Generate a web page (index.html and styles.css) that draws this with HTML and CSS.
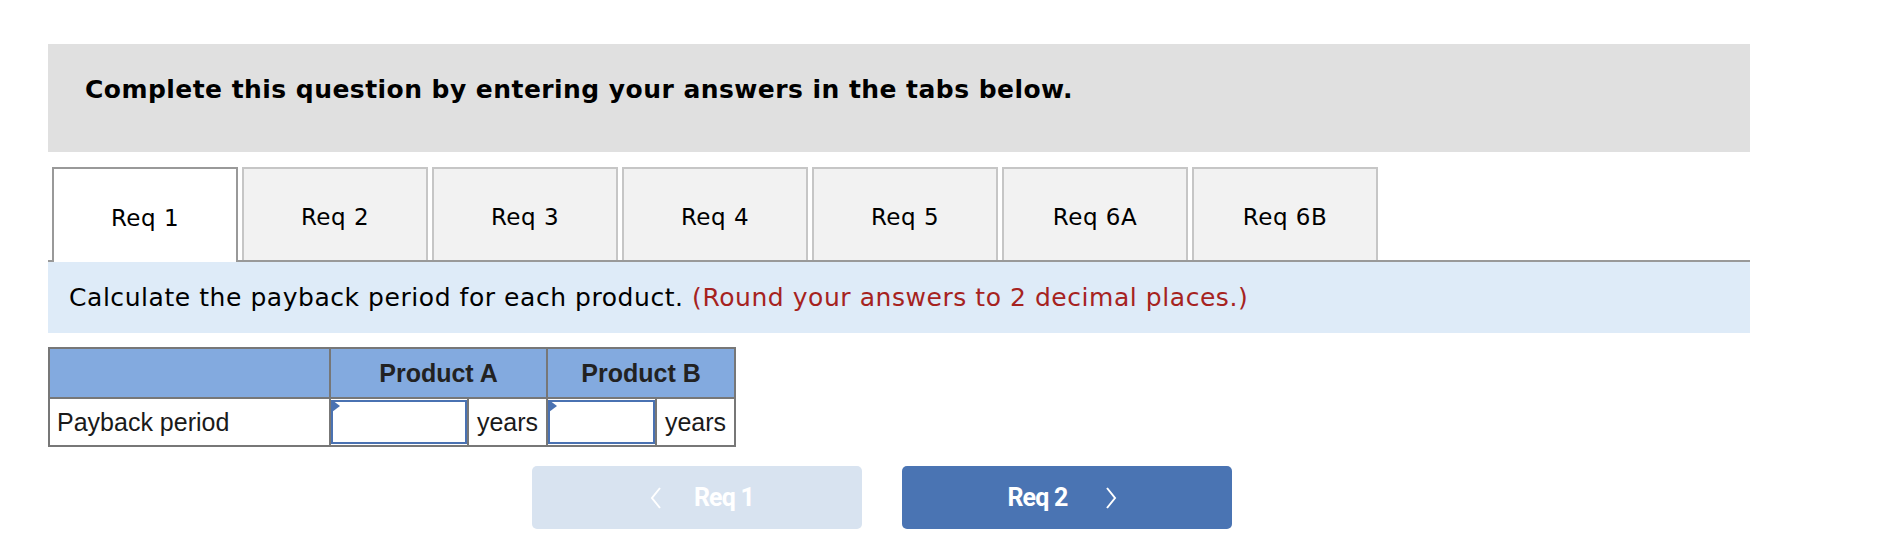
FILE: index.html
```html
<!DOCTYPE html>
<html lang="en">
<head>
    <meta charset="UTF-8">
    <title>Req 1</title>
    <link rel="stylesheet" href="styles.css">
</head>
<body>
    <div class="page">
        <div class="intro">
            <h1>Complete this question by entering your answers in the tabs below.</h1>
        </div>

        <!-- tabs -->
        <div class="tabs">
            <div class="tab active">Req 1</div>
            <div class="tab">Req 2</div>
            <div class="tab">Req 3</div>
            <div class="tab">Req 4</div>
            <div class="tab">Req 5</div>
            <div class="tab">Req 6A</div>
            <div class="tab">Req 6B</div>
        </div>

        <div class="instructions">
            <p>Calculate the payback period for each product. <span class="hint">(Round your answers to 2 decimal places.)</span></p>
        </div>

        <table class="answer-table">
            <tr class="head">
                <th class="label-col"></th>
                <th colspan="2">Product A</th>
                <th colspan="2">Product B</th>
            </tr>
            <tr>
                <td class="label-col">Payback period</td>
                <td class="input-cell input-a"><span class="marker"></span><input type="text"></td>
                <td class="unit">years</td>
                <td class="input-cell input-b"><span class="marker"></span><input type="text"></td>
                <td class="unit">years</td>
            </tr>
        </table>

        <div class="nav">
            <button class="nav-btn prev">
                <svg class="chev" width="12" height="22" viewBox="0 0 12 22"><path d="M10 1 L2 11 L10 21" fill="none" stroke="#fff" stroke-width="2"/></svg>
                <span>Req 1</span>
            </button>
            <button class="nav-btn next">
                <span>Req 2</span>
                <svg class="chev" width="12" height="22" viewBox="0 0 12 22"><path d="M2 1 L10 11 L2 21" fill="none" stroke="#fff" stroke-width="2"/></svg>
            </button>
        </div>
    </div>
</body>
</html>
```

FILE: styles.css
```css
body {
    margin: 0;
    background-color: #fff;
    color: #000;
    font-family: "DejaVu Sans", Verdana, sans-serif;
}
.page {
    width: 1702px;
    margin-left: 48px;
    padding-top: 44px;
}
.intro {
    background-color: #e0e0e0;
    height: 108px;
    padding-left: 37px;
    box-sizing: border-box;
    display: flex;
    align-items: center;
}
.intro h1 {
    margin: 0;
    font-size: 25px;
    letter-spacing: 0.45px;
    font-weight: bold;
    position: relative;
    top: -9px;
}
.tabs {
    display: flex;
    gap: 4px;
    margin-top: 15px;
    padding-left: 4px;
    border-bottom: 2px solid #999;
    height: 93px;
    align-items: flex-start;
}
.tab {
    width: 186px;
    height: 93px;
    box-sizing: border-box;
    border: 2px solid #c6c6c6;
    border-bottom: none;
    background-color: #f2f2f2;
    font-size: 23px;
    letter-spacing: 0.5px;
    display: flex;
    align-items: center;
    justify-content: center;
    padding-top: 5px;
}
.tab.active {
    height: 95px;
    background-color: #fff;
    border-color: #999;
}
.instructions {
    background-color: #deebf8;
    height: 71px;
    box-sizing: border-box;
    padding-left: 21px;
    display: flex;
    align-items: center;
}
.instructions p {
    margin: 0;
    font-size: 25px;
    letter-spacing: 0.55px;
}
.hint {
    color: #a6231f;
}
.answer-table {
    margin-top: 14px;
    border-collapse: collapse;
    font-family: "Liberation Sans", Arial, sans-serif;
    font-size: 25px;
    color: #1a1a1a;
}
.answer-table th,
.answer-table td {
    border: 2px solid #777;
    padding: 0;
}
.answer-table .head th {
    background-color: #83aadf;
    height: 48px;
    font-weight: bold;
    text-align: center;
    color: #222;
}
.answer-table td {
    height: 46px;
}
.label-col {
    width: 272px;
    padding-left: 7px !important;
    text-align: left;
}
.input-cell {
    position: relative;
}
.input-a { width: 136px; }
.input-b { width: 107px; }
.input-cell input {
    display: block;
    width: 100%;
    height: 44px;
    box-sizing: border-box;
    border: 2px solid #4a72b2;
    margin: 0;
    padding: 0 6px;
    font-size: 22px;
    outline: none;
}
.marker {
    position: absolute;
    left: 1px;
    top: 1px;
    width: 0;
    height: 0;
    border-top: 6px solid transparent;
    border-bottom: 6px solid transparent;
    border-left: 8px solid #4a72b2;
}
.unit {
    width: 77px;
    text-align: center;
}
.nav {
    display: flex;
    gap: 40px;
    margin-top: 19px;
    padding-left: 484px;
}
.nav-btn {
    width: 330px;
    height: 63px;
    border: none;
    border-radius: 5px;
    color: #fff;
    font-family: Roboto, sans-serif;
    font-weight: bold;
    font-size: 25px;
    letter-spacing: -0.8px;
    display: flex;
    align-items: center;
    justify-content: center;
    gap: 32px;
    padding: 0;
}
.prev {
    background-color: #d8e3f0;
    padding-left: 10px;
}
.next {
    background-color: #4a74b3;
    gap: 37px;
    padding-right: 10px;
}
```
